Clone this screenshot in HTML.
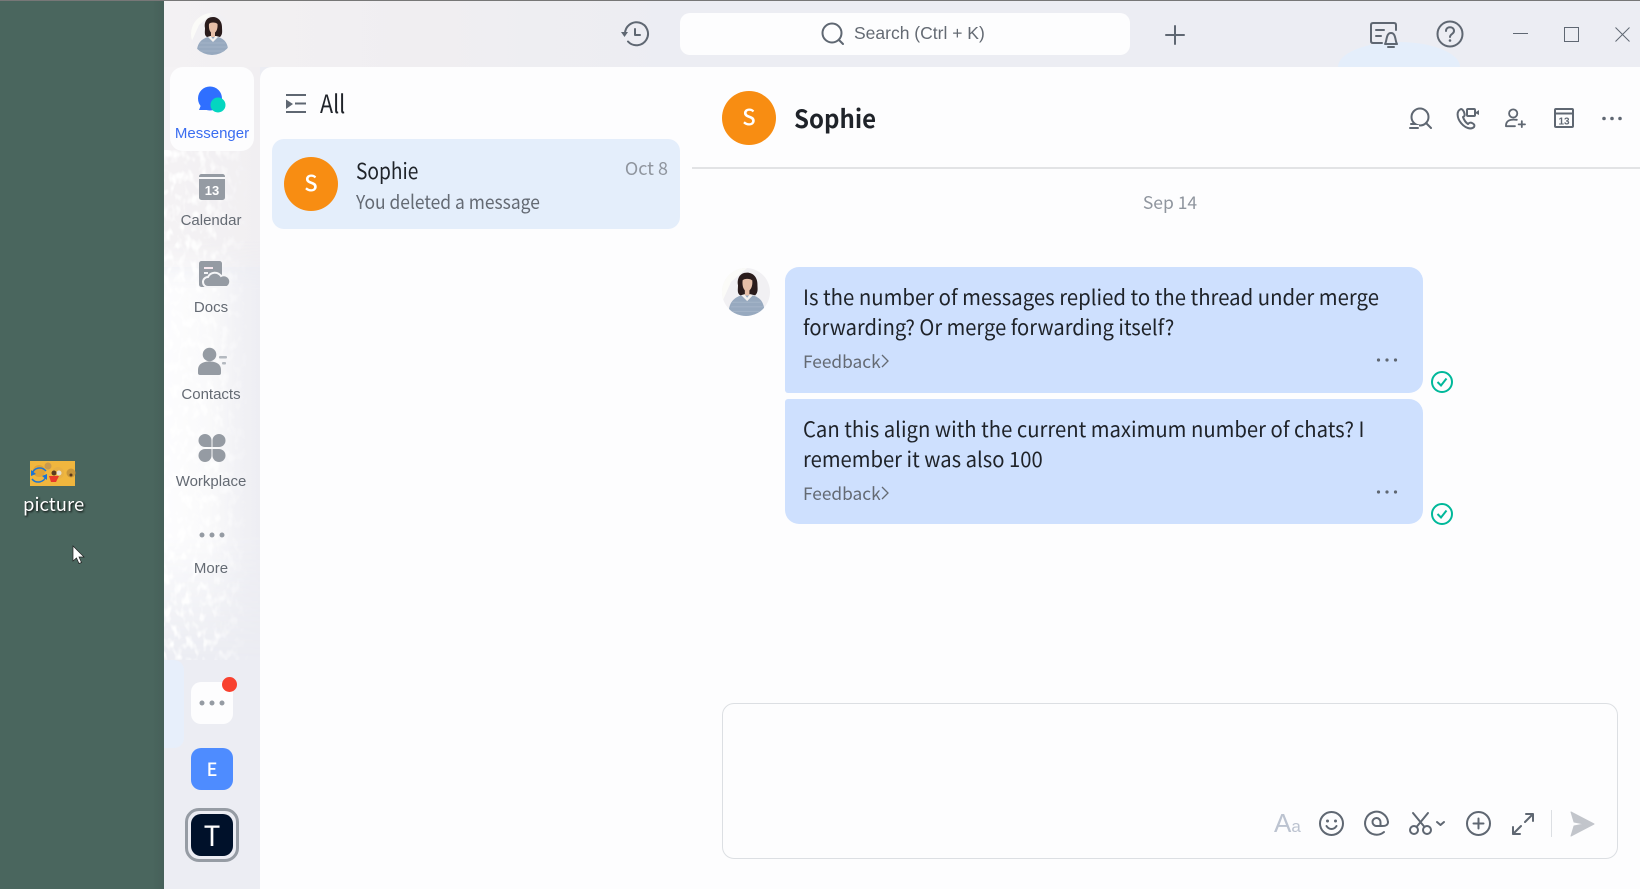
<!DOCTYPE html>
<html><head><meta charset="utf-8"><style>
html,body{margin:0;padding:0}
body{width:1640px;height:889px;overflow:hidden;position:relative;background:#4a665e;font-family:"Noto Sans CJK SC","Liberation Sans",sans-serif}
.a{position:absolute;white-space:nowrap;line-height:1}
svg{position:absolute;overflow:visible}
.nav{font-family:"Liberation Sans",sans-serif;font-size:15px;color:#646a73;width:96px;left:163px;text-align:center}
.ln{fill:none;stroke:#5f6772;stroke-width:2;stroke-linecap:round;stroke-linejoin:round}
.sx{transform-origin:0 50%}
.msg{font-size:21px;color:#1f2329;left:803px;transform:scaleX(.968);transform-origin:0 50%}
.fb{font-size:17.300px;color:#646a73;left:803px}
</style></head><body>
<div class="a" style="left:0;top:0;width:1640px;height:1px;background:#777"></div>
<div class="a" style="left:152px;top:1px;width:12px;height:888px;background:linear-gradient(90deg,#4a665e,#466059)"></div>
<div class="a" style="left:164px;top:1px;width:1476px;height:888px;background:#ecedf3"></div>
<div class="a" style="left:164px;top:1px;width:520px;height:66px;background:linear-gradient(90deg,#f3f1f3,#f0eef1 50%,#ecedf3)"></div>
<div class="a" style="left:164px;top:67px;width:96px;height:200px;background:linear-gradient(90deg,#f4f2f4,#f1eff2)"></div>
<div class="a" style="left:164px;top:240px;width:96px;height:420px;background:linear-gradient(90deg,#fdfdfe 0,#fafafb 45%,#f1f1f5 80%,#eeeef3 100%);-webkit-mask-image:linear-gradient(180deg,transparent 0,#000 12%,#000 70%,transparent 100%)"></div>
<svg style="left:164px;top:150px" width="96" height="510" viewBox="0 0 96 510"><defs>
<filter id="sp" x="0" y="0" width="100%" height="100%"><feTurbulence type="fractalNoise" baseFrequency=".14 .09" numOctaves="2" seed="5"/><feColorMatrix values="0 0 0 0 1 0 0 0 0 1 0 0 0 0 1 3.500 0 0 0 -1.600"/></filter>
<linearGradient id="sg" x1="0" y1="0" x2="1" y2="0"><stop offset="0" stop-color="#fff"/><stop offset=".55" stop-color="#fff" stop-opacity=".7"/><stop offset=".9" stop-color="#fff" stop-opacity="0"/></linearGradient>
<mask id="sm"><rect width="96" height="510" fill="url(#sg)"/></mask></defs>
<g mask="url(#sm)"><rect width="96" height="510" filter="url(#sp)"/></g></svg>
<div class="a" style="left:164px;top:660px;width:20px;height:88px;background:#e6eefb;opacity:.85;border-radius:0 10px 10px 0"></div>
<div class="a" style="left:1338px;top:42px;width:122px;height:25px;background:#e4eefb;border-radius:61px 61px 0 0/25px 25px 0 0"></div>
<div class="a" style="left:260px;top:67px;width:1380px;height:822px;background:#fdfdfe;border-top-left-radius:12px"></div>

<svg width="0" height="0" style="left:0;top:0"><defs>
<clipPath id="cc"><circle cx="21" cy="21" r="21"/></clipPath>
<symbol id="av" viewBox="0 0 42 42"><g clip-path="url(#cc)"><rect width="42" height="42" fill="#f1f0f3"/>
<path d="M0 0H22L8 12 0 30Z" fill="#fbfbf8"/>
<path d="M6 42C5 31 10 26 17 24H27C34 26 38 31 37 42Z" fill="#97a9bf"/>
<path d="M9 30L34 30M8 34L36 34M7 38L37 38" stroke="#a3b3c7" stroke-width="1"/>
<path d="M22 4C15 4 13 10 14 15C14 19 13 22 16 24L20 23H25L29 24C32 21 31 18 31 14C31 8 27 4 22 4Z" fill="#2a1c1c"/>
<path d="M18 11C19 9 25 9 26.500 11C27 16 25 20 22 20.500C19 20 17.500 16 18 11Z" fill="#e6bfa8"/>
<rect x="20" y="19" width="4" height="5" fill="#e6bfa8"/>
<path d="M17 24L22 29L27 24L24.500 23L22 26L19.500 23Z" fill="#f4f2f0"/></g></symbol>
</defs></svg>

<!-- desktop -->
<svg style="left:30px;top:461px" width="45" height="26" viewBox="0 0 45 26"><rect width="45" height="25" fill="#f0b63e"/><circle cx="9" cy="10" r="6" fill="#dfa338"/><circle cx="18" cy="5" r="3.500" fill="#c99a4e"/><circle cx="28" cy="12" r="6" fill="#e8b044"/><circle cx="24" cy="12" r="2.500" fill="#5a3a1e"/><circle cx="29" cy="12" r="2.500" fill="#e8e0d0"/><path d="M19 15h10l-3 6h-5z" fill="#e8392a"/><circle cx="41" cy="12" r="4.500" fill="#c9963a"/><circle cx="41" cy="14" r="1.500" fill="#5a3a1e"/><path d="M2 13a8 8 0 0 1 14-3M16 15a8 8 0 0 1-14 3" fill="none" stroke="#1d74d2" stroke-width="1.500"/><path d="M1 9l0 6 5-2zM17 19l0-6-5 2z" fill="#1d74d2"/></svg>
<div class="a" style="left:23px;top:495px;font-size:18.500px;color:#fff;text-shadow:1px 1px 2px #000">picture</div>
<svg style="left:72px;top:545px" width="14" height="20" viewBox="0 0 14 20"><path d="M1 1V16L4.500 13L7 18.500L9.500 17.500L7 12H12Z" fill="#fff" stroke="#222" stroke-width=".7"/></svg>

<!-- sidebar -->
<svg style="left:191px;top:13px" width="42" height="42"><use href="#av"/></svg>
<div class="a" style="left:170px;top:67px;width:84px;height:84px;background:#fdfdfe;border-radius:13px"></div>
<svg style="left:197px;top:86px" width="30" height="27" viewBox="0 0 30 27"><circle cx="13" cy="12.500" r="12" fill="#2f6fff"/><path d="M4 19L2 24H16V18Z" fill="#2f6fff"/><circle cx="21" cy="19" r="7.500" fill="#04d6c0"/></svg>
<div class="a nav" style="top:126px;left:164px;color:#3a6df0">Messenger</div>

<svg style="left:199px;top:174px" width="26" height="26" viewBox="0 0 26 26"><rect width="26" height="26" rx="2.500" fill="#959ba3"/><rect y="3" width="26" height="2" fill="#f6f6f8"/><text x="13" y="21" font-family="Liberation Sans" font-weight="700" font-size="13" fill="#fff" text-anchor="middle">13</text></svg>
<div class="a nav" style="top:213px">Calendar</div>

<svg style="left:199px;top:261px" width="29" height="27" viewBox="0 0 29 27"><rect width="23" height="26" rx="2.500" fill="#959ba3"/><rect x="5" y="6" width="9" height="2" fill="#f8e8ee"/><rect x="5" y="11" width="4" height="2" fill="#f4f4f6"/><path d="M9 26a5 5 0 0 1 0-10a7.500 7.500 0 0 1 13-1a5.500 5.500 0 0 1 6 11Z" fill="#959ba3" stroke="#f6f6f8" stroke-width="2"/></svg>
<div class="a nav" style="top:300px">Docs</div>

<svg style="left:198px;top:347px" width="30" height="28" viewBox="0 0 30 28"><circle cx="11.500" cy="7.500" r="6.800" fill="#959ba3"/><path d="M0 26V23C0 17 5 14.500 11.500 14.500C18 14.500 23 17 23 23V26Q23 28 21 28H2Q0 28 0 26Z" fill="#959ba3"/><rect x="21" y="9" width="8" height="2.500" rx="1" fill="#b4b9c0"/><rect x="24" y="15" width="4" height="2.500" rx="1" fill="#b4b9c0"/></svg>
<div class="a nav" style="top:387px">Contacts</div>

<svg style="left:198px;top:434px" width="28" height="28" viewBox="0 0 28 28" fill="#959ba3"><path d="M7 0a6.500 6.500 0 0 1 6.500 6.500V13H7A6.500 6.500 0 0 1 7 0Z"/><path d="M21 0a6.500 6.500 0 0 1 0 13H14.500V6.500A6.500 6.500 0 0 1 21 0Z"/><path d="M7 15h6.500V21.500A6.500 6.500 0 1 1 7 15Z"/><path d="M14.500 15H21a6.500 6.500 0 1 1-6.500 6.500Z"/></svg>
<div class="a nav" style="top:474px">Workplace</div>

<svg style="left:199px;top:531px" width="26" height="8" viewBox="0 0 26 8" fill="#959ba3"><circle cx="3" cy="4" r="2.500"/><circle cx="13" cy="4" r="2.500"/><circle cx="23" cy="4" r="2.500"/></svg>
<div class="a nav" style="top:561px">More</div>

<div class="a" style="left:191px;top:682px;width:42px;height:42px;background:#fdfdfe;border-radius:10px"></div>
<svg style="left:199px;top:699px" width="26" height="8" viewBox="0 0 26 8" fill="#959ba3"><circle cx="3" cy="4" r="2.500"/><circle cx="13" cy="4" r="2.500"/><circle cx="23" cy="4" r="2.500"/></svg>
<div class="a" style="left:222px;top:677px;width:15px;height:15px;background:#f8412f;border-radius:50%"></div>
<div class="a" style="left:191px;top:748px;width:42px;height:42px;line-height:42px;text-align:center;background:#4e8cff;border-radius:10px;color:#fff;font-size:18px;font-weight:500">E</div>
<div class="a" style="left:185px;top:808px;width:48px;height:48px;border:3px solid #969ca4;border-radius:14px"></div>
<div class="a" style="left:191px;top:814px;width:42px;height:42px;line-height:42px;text-align:center;background:#00112a;border-radius:10px;color:#fff;font-size:28px">T</div>

<!-- top bar -->
<svg style="left:621px;top:20px" width="28" height="28" viewBox="0 0 28 28"><path class="ln" d="M4 14A11.500 11.500 0 1 1 7 21.500"/><path d="M0 12L7 12L3.500 17Z" fill="#5f6772"/><path class="ln" d="M14 9V15H19"/></svg>
<div class="a" style="left:680px;top:13px;width:450px;height:42px;background:#fdfdfe;border-radius:10px"></div>
<svg style="left:821px;top:22px" width="24" height="24" viewBox="0 0 24 24"><circle class="ln" cx="11" cy="11" r="9.500"/><path class="ln" d="M18 18L22 22"/></svg>
<div class="a" style="left:854px;top:25px;font-family:'Liberation Sans',sans-serif;font-size:17.500px;color:#646a73">Search (Ctrl + K)</div>
<svg style="left:1165px;top:25px" width="20" height="20" viewBox="0 0 20 20"><path class="ln" d="M10 1V19M1 10H19"/></svg>
<svg style="left:1369px;top:21px" width="30" height="28" viewBox="0 0 30 28"><path class="ln" stroke-width="2.400" d="M13 22H4Q2 22 2 20V4Q2 2 4 2H25Q27 2 27 4V9"/><path class="ln" stroke-width="2.400" d="M7 9H15M7 15H12"/><path class="ln" stroke-width="2.400" d="M16 23C18 20 17 12 22 12C27 12 26 20 28 23Z"/><path class="ln" stroke-width="2.400" d="M19 26H25"/></svg>
<svg style="left:1436px;top:20px" width="28" height="28" viewBox="0 0 28 28"><circle class="ln" cx="14" cy="14" r="12.500"/><path class="ln" d="M10 11C10 6 18 6 18 11C18 14 14 14 14 17"/><circle cx="14" cy="20.500" r="1.300" fill="#5f6772"/></svg>
<div class="a" style="left:1513px;top:33px;width:15px;height:1px;background:#5f6772"></div>
<div class="a" style="left:1564px;top:27px;width:13px;height:13px;border:1px solid #5f6772"></div>
<svg style="left:1615px;top:27px" width="15" height="15" viewBox="0 0 15 15"><path d="M.5.500L14.500 14.500M14.500.500L.5 14.500" stroke="#5f6772" fill="none"/></svg>

<!-- list -->
<svg style="left:286px;top:94px" width="21" height="19" viewBox="0 0 21 19"><path d="M0 1H20M9 9.500H20M0 18H20" stroke="#5f6772" stroke-width="2" fill="none"/><path d="M0 5.500L7 10L0 15Z" fill="#5f6772"/></svg>
<div class="a sx" style="left:320px;top:91px;font-size:25px;color:#1f2329;transform:scaleX(.86)">All</div>
<div class="a" style="left:272px;top:139px;width:408px;height:90px;background:#e4eefb;border-radius:12px"></div>
<div class="a" style="left:284px;top:157px;width:54px;height:54px;line-height:50px;text-align:center;background:#f88d12;border-radius:50%;color:#fff;font-size:22px;font-weight:500">S</div>
<div class="a sx" style="left:356px;top:159px;font-size:22px;color:#1f2329;transform:scaleX(.87)">Sophie</div>
<div class="a" style="right:972px;top:159px;font-size:18px;color:#8f959e">Oct 8</div>
<div class="a sx" style="left:356px;top:192px;font-size:19px;color:#646a73;transform:scaleX(.917)">You deleted a message</div>

<!-- chat header -->
<div class="a" style="left:722px;top:91px;width:54px;height:54px;line-height:50px;text-align:center;background:#f88d12;border-radius:50%;color:#fff;font-size:22px;font-weight:500">S</div>
<div class="a sx" style="left:794px;top:106px;font-size:25px;font-weight:700;color:#1f2329;transform:scaleX(.96)">Sophie</div>
<svg style="left:1408px;top:107px" width="24" height="22" viewBox="0 0 24 22"><circle class="ln" cx="12" cy="10" r="8.500"/><path class="ln" d="M18 16L23 21"/><path d="M1 20.500H11" stroke="#fdfdfe" stroke-width="5"/><path class="ln" d="M2 21H10M3 17H7"/></svg>
<svg style="left:1456px;top:108px" width="24" height="22" viewBox="0 0 24 22"><path class="ln" d="M5 1C0 3 1 10 5 15C9 20 15 22 18 19C19 17 18 16 16 15C14 14 13 15 12 16C9 14 8 12 7 9C9 8 9 7 8 4C7 2 6 1 5 1Z"/><rect x="11" y="1" width="8" height="7" rx="1" fill="none" stroke="#5f6772" stroke-width="2"/><path d="M20 4L23 2V7L20 5.500Z" fill="#5f6772"/></svg>
<svg style="left:1504px;top:108px" width="22" height="20" viewBox="0 0 24 22"><circle class="ln" cx="10" cy="6" r="4.500"/><path class="ln" d="M2 20C2 14 6 12 14 13M2 20H12M16 18H23M19.500 14.500V21"/></svg>
<svg style="left:1554px;top:108px" width="20" height="20" viewBox="0 0 20 20"><rect class="ln" x="1" y="1" width="18" height="18" rx="1"/><path class="ln" d="M1 5.500H19"/><text x="10" y="16.500" font-family="Liberation Sans" font-weight="700" font-size="10" fill="#5f6772" text-anchor="middle">13</text></svg>
<svg style="left:1602px;top:116px" width="20" height="5" viewBox="0 0 20 5" fill="#5f6772"><circle cx="2" cy="2.500" r="1.800"/><circle cx="10" cy="2.500" r="1.800"/><circle cx="18" cy="2.500" r="1.800"/></svg>
<div class="a" style="left:692px;top:167px;width:948px;height:2px;background:#e2e3e5"></div>
<div class="a" style="left:1070px;width:200px;text-align:center;top:194px;font-size:17.500px;color:#8f959e">Sep 14</div>

<!-- messages -->
<svg style="left:722px;top:268px" width="48" height="48"><use href="#av" width="48" height="48"/></svg>
<div class="a" style="left:785px;top:267px;width:638px;height:126px;background:#cee0fe;border-radius:14px 14px 14px 3px"></div>
<div class="a" style="left:785px;top:399px;width:638px;height:125px;background:#cee0fe;border-radius:3px 14px 14px 14px"></div>
<div class="a msg" style="top:287px">Is the number of messages replied to the thread under merge</div>
<div class="a msg" style="top:317px;transform:scaleX(.958)">forwarding? Or merge forwarding itself?</div>
<div class="a fb" style="top:352px">Feedback</div>
<svg style="left:881px;top:354px" width="8" height="14" viewBox="0 0 8 14"><path d="M1 1L7 7L1 13" fill="none" stroke="#646a73" stroke-width="1.300"/></svg>
<svg style="left:1376px;top:358px" width="22" height="5" viewBox="0 0 22 5" fill="#5f6772"><circle cx="2.500" cy="2" r="1.600"/><circle cx="11" cy="2" r="1.600"/><circle cx="19.500" cy="2" r="1.600"/></svg>
<svg style="left:1431px;top:371px" width="22" height="22" viewBox="0 0 22 22"><circle cx="11" cy="11" r="10" fill="none" stroke="#00b89a" stroke-width="2"/><path d="M6.500 11L10 14.500L15.500 7.500" fill="none" stroke="#00b89a" stroke-width="2"/></svg>
<div class="a msg" style="top:419px;transform:scaleX(.965)">Can this align with the current maximum number of chats? I</div>
<div class="a msg" style="top:449px;transform:scaleX(.963)">remember it was also 100</div>
<div class="a fb" style="top:484px">Feedback</div>
<svg style="left:881px;top:486px" width="8" height="14" viewBox="0 0 8 14"><path d="M1 1L7 7L1 13" fill="none" stroke="#646a73" stroke-width="1.300"/></svg>
<svg style="left:1376px;top:490px" width="22" height="5" viewBox="0 0 22 5" fill="#5f6772"><circle cx="2.500" cy="2" r="1.600"/><circle cx="11" cy="2" r="1.600"/><circle cx="19.500" cy="2" r="1.600"/></svg>
<svg style="left:1431px;top:503px" width="22" height="22" viewBox="0 0 22 22"><circle cx="11" cy="11" r="10" fill="none" stroke="#00b89a" stroke-width="2"/><path d="M6.500 11L10 14.500L15.500 7.500" fill="none" stroke="#00b89a" stroke-width="2"/></svg>

<!-- input -->
<div class="a" style="left:722px;top:703px;width:894px;height:154px;border:1px solid #dcdfe3;border-radius:12px"></div>
<div class="a" style="left:1274px;top:810px;font-family:'Liberation Sans',sans-serif;font-size:26px;color:#bcc3d0">A<span style="font-size:17px">a</span></div>
<svg style="left:1319px;top:811px" width="25" height="25" viewBox="0 0 25 25"><circle class="ln" cx="12.500" cy="12.500" r="11.500"/><circle cx="8.500" cy="10" r="1.500" fill="#5f6772"/><circle cx="16.500" cy="10" r="1.500" fill="#5f6772"/><path class="ln" d="M7.500 15C10 19 15 19 17.500 15"/></svg>
<svg style="left:1364px;top:811px" width="25" height="25" viewBox="0 0 25 25"><path class="ln" d="M20 21A11.500 11.500 0 1 1 24 11"/><path class="ln" d="M24 11C24 15 20 15 18 15H12A4 4 0 1 1 16.500 11V15"/></svg>
<svg style="left:1408px;top:812px" width="40" height="24" viewBox="0 0 40 24"><circle class="ln" cx="6" cy="18" r="4"/><circle class="ln" cx="19" cy="18" r="4"/><path class="ln" d="M8.500 15L20 1M16.500 15L5 1"/><path class="ln" d="M29 10L32.500 13L36 10"/></svg>
<svg style="left:1466px;top:811px" width="25" height="25" viewBox="0 0 25 25"><circle class="ln" cx="12.500" cy="12.500" r="11.500"/><path class="ln" d="M12.500 7.500V17.500M7.500 12.500H17.500"/></svg>
<svg style="left:1511px;top:812px" width="24" height="24" viewBox="0 0 24 24"><path class="ln" d="M14 10L22 2M15 2H22V9M10 14L2 22M2 15V22H9"/></svg>
<div class="a" style="left:1551px;top:810px;width:1px;height:27px;background:#dcdfe3"></div>
<svg style="left:1570px;top:811px" width="25" height="26" viewBox="0 0 25 26"><path d="M1 1L24 13L1 25L4 15L14 13L4 11Z" fill="#c2c5cb" stroke="#c2c5cb" stroke-linejoin="round"/></svg>
</body></html>
